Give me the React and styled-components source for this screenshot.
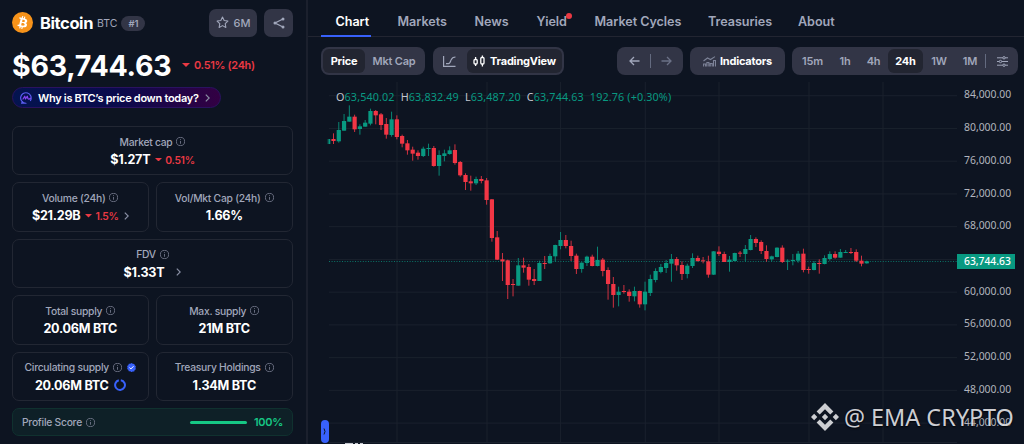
import React from 'react'
import styled, { createGlobalStyle } from 'styled-components'

const GlobalStyle = createGlobalStyle`
   * { box-sizing: border-box; }
   body {
      margin: 0;
      background: #0d1421;
      overflow: hidden;
      font-family: Inter, "Liberation Sans", sans-serif;
   }
`
const Page = styled.div`
   position: relative;
   display: flex;
   width: 1024px;
   height: 444px;
   overflow: hidden;
   color: #fff;
`
const Sidebar = styled.aside`
   width: 308px;
   height: 444px;
   padding: 8px 13px 0 12px;
   border-right: 2px solid #1b202d;
   display: flex;
   flex-direction: column;
`
const Header = styled.div`
   display: flex;
   align-items: center;
   height: 29px;
`
const CoinName = styled.h1`
   margin: 0 0 0 7px;
   font-size: 16.5px;
   font-weight: 700;
   letter-spacing: -0.4px;
`
const Ticker = styled.span`
   margin: 2px 0 0 4px;
   font-size: 10.5px;
   color: #a1a7bb;
`
const Rank = styled.span`
   margin: 1px auto 0 4px;
   width: 24px;
   height: 15px;
   line-height: 15px;
   border-radius: 8px;
   background: #323546;
   color: #a1a7bb;
   font-size: 9.5px;
   font-weight: 600;
   text-align: center;
`
const HeaderButton = styled.button`
   width: ${(p) => p.$width}px;
   height: 28px;
   margin-left: 7px;
   padding: 0;
   border: 0;
   border-radius: 7px;
   background: #323546;
   color: #a1a7bb;
   font: 500 11px Inter, sans-serif;
   display: flex;
   align-items: center;
   justify-content: center;
   gap: 5px;
`
const PriceRow = styled.div`
   display: flex;
   align-items: center;
   height: 34px;
   margin-top: 11px;
`
const Price = styled.span`
   width: 170px;
   font-size: 28.5px;
   font-weight: 700;
   letter-spacing: -0.25px;
   white-space: nowrap;
`
const Change = styled.span`
   display: inline-flex;
   align-items: center;
   gap: ${(p) => p.$gap || 3}px;
   color: #ea3943;
   font-size: ${(p) => p.$size || 10.3}px;
   font-weight: 600;
   letter-spacing: -0.3px;
   white-space: nowrap;
`
const WhyButton = styled.button`
   width: 209px;
   height: 21px;
   margin: 5px 0 18px;
   padding: 0 0 0 7px;
   border: 1px solid #2a1260;
   border-radius: 11px;
   background: linear-gradient(90deg, #04144f 0%, #0a0a4c 50%, #330043 100%);
   color: #fff;
   font: 600 11px Inter, sans-serif;
   letter-spacing: -0.3px;
   display: flex;
   align-items: center;
   gap: 6px;
   white-space: nowrap;
`
const Stats = styled.div`
   display: grid;
   grid-template-columns: 136.5px 137.5px;
   grid-auto-rows: 49.4px;
   gap: 7px;
`
const StatCard = styled.div`
   grid-column: ${(p) => (p.$wide ? '1 / 3' : 'auto')};
   border: 1px solid #222733;
   border-radius: 7px;
   display: flex;
   flex-direction: column;
   align-items: center;
   padding-top: 7px;
`
const Label = styled.div`
   display: flex;
   align-items: center;
   gap: 4px;
   height: 15px;
   color: #a1a7bb;
   font-size: 10.3px;
   font-weight: 500;
   letter-spacing: -0.25px;
   white-space: nowrap;
`
const Value = styled.div`
   display: flex;
   align-items: center;
   gap: ${(p) => p.$gap || 5}px;
   height: 21px;
   font-size: 12.6px;
   font-weight: 700;
   letter-spacing: -0.25px;
   white-space: nowrap;
`
const Score = styled.div`
   display: flex;
   align-items: center;
   height: 28px;
   margin-top: 7px;
   padding: 1px 9px 0;
   border: 1px solid #10312f;
   border-radius: 7px;
   background: #0e2027;
`
const ScoreBar = styled.div`
   width: 57px;
   height: 3px;
   margin: 0 7px 0 auto;
   border-radius: 2px;
   background: #16c784;
`
const ScoreValue = styled.span`
   color: #16c784;
   font-size: 11px;
   font-weight: 600;
   letter-spacing: -0.3px;
`
const Main = styled.main`
   width: 716px;
   display: flex;
   flex-direction: column;
`
const Tabs = styled.nav`
   display: flex;
   height: 37px;
   padding-left: 13px;
   border-bottom: 1px solid #222531;
`
const Tab = styled.a`
   position: relative;
   width: ${(p) => p.$width}px;
   height: ${(p) => (p.$active ? 37 : 36)}px;
   margin-right: ${(p) => p.$gap || 0}px;
   padding: 12px 0 0 14.5px;
   border-bottom: ${(p) => (p.$active ? '2px solid #3861fb' : '0')};
   color: ${(p) => (p.$active ? '#fff' : '#a1a7bb')};
   font-size: 12.6px;
   font-weight: 600;
   letter-spacing: -0.05px;
   line-height: 19px;
   white-space: nowrap;
`
const Dot = styled.i`
   position: absolute;
   left: 44px;
   top: 13px;
   width: 6px;
   height: 6px;
   border-radius: 50%;
   background: #ea3943;
`
const Toolbar = styled.div`
   display: flex;
   height: 28px;
   margin: 10px 6px 0 13px;
`
const Group = styled.div`
   display: flex;
   align-items: center;
   justify-content: ${(p) => p.$justify || 'flex-start'};
   gap: ${(p) => p.$gap || 0}px;
   width: ${(p) => p.$width}px;
   height: 28px;
   margin-left: ${(p) => p.$left || 0}px;
   padding: 0 2px;
   border-radius: 8px;
   background: #323546;
   color: #a1a7bb;
   font-size: 11px;
   font-weight: 600;
`
const Segment = styled.div`
   display: flex;
   flex-shrink: 0;
   align-items: center;
   justify-content: center;
   gap: ${(p) => p.$gap || 4}px;
   width: ${(p) => p.$width}px;
   height: 24px;
   border-radius: 6px;
   background: ${(p) => (p.$active ? '#222531' : 'transparent')};
   color: ${(p) => (p.$active || p.$bright ? '#fff' : '#a1a7bb')};
   font-weight: ${(p) => (p.$active || p.$bright ? 700 : 600)};
   letter-spacing: -0.2px;
   white-space: nowrap;
`
const Divider = styled.i`
   flex-shrink: 0;
   width: 1px;
   height: 14px;
   background: #646b80;
`
const ChartArea = styled.section`
   position: relative;
   display: flex;
   height: 369px;
   font-family: "Noto Sans", "Open Sans", sans-serif;
`
const Plot = styled.svg`
   display: block;
   width: 649px;
   height: 369px;
`
const Axis = styled.div`
   padding-top: 3.4px;
   width: 61px;
`
const Tick = styled.div`
   height: 32.72px;
   line-height: 33px;
   padding-left: 7px;
   color: #b2b5be;
   font-size: 10.4px;
`
const PriceTag = styled.div`
   position: absolute;
   left: 649px;
   top: 179px;
   width: 58px;
   height: 15px;
   padding-left: 7px;
   line-height: 15px;
   background: #089981;
   font-size: 10.3px;
   font-weight: 500;
`
const Legend = styled.div`
   position: absolute;
   left: 28px;
   top: 14px;
   display: flex;
   gap: 6px;
   font-size: 10.8px;
   letter-spacing: 0.12px;
   line-height: 16px;
   color: #c4c7cf;
   white-space: nowrap;

   b {
      font-weight: 400;
      color: #089981;
   }
`
const Handle = styled.div`
   position: absolute;
   left: 13px;
   top: 345px;
   width: 8px;
   height: 23px;
   border-radius: 4px;
   background: #3861fb;
   display: flex;
   align-items: center;
   justify-content: center;
`
const Watermark = styled.div`
   position: absolute;
   left: 811px;
   top: 402px;
   height: 30px;
   display: flex;
   align-items: center;
   gap: 5px;
   color: #dcdde0;
   opacity: 0.93;
   font-family: "Noto Sans", "Open Sans", sans-serif;
   font-size: 23.4px;
   white-space: nowrap;
   text-shadow: 0 1px 2px #000;
`

// direction, body top, body bottom, wick top, wick bottom (1/3 px from y = 90)
const candles = [
   ['g', 147, 162, 147, 162], ['r', 147, 153, 130, 162], ['g', 120, 154, 96, 158],
   ['g', 93, 122, 72, 122], ['g', 80, 95, 46, 95], ['r', 80, 118, 74, 126],
   ['g', 109, 117, 103, 134], ['g', 98, 110, 90, 110], ['g', 63, 101, 56, 106],
   ['r', 63, 76, 60, 103], ['r', 73, 105, 69, 120], ['r', 102, 134, 84, 146],
   ['g', 88, 135, 65, 140], ['r', 88, 141, 76, 148], ['r', 138, 161, 134, 172],
   ['r', 160, 181, 150, 194], ['r', 179, 191, 170, 212], ['r', 188, 198, 181, 209],
   ['g', 176, 198, 170, 201], ['g', 174, 177, 161, 198], ['r', 174, 228, 168, 230],
   ['g', 195, 228, 181, 257], ['g', 190, 198, 179, 214], ['g', 181, 192, 169, 194],
   ['r', 180, 219, 163, 224], ['r', 216, 256, 213, 260], ['r', 255, 276, 250, 300],
   ['r', 274, 280, 257, 302], ['g', 267, 280, 260, 285], ['r', 267, 273, 258, 280],
   ['r', 271, 330, 264, 344], ['r', 328, 444, 327, 455], ['r', 442, 509, 423, 510],
   ['r', 508, 514, 489, 573], ['r', 511, 585, 509, 627], ['r', 582, 585, 567, 619],
   ['g', 526, 587, 504, 587], ['r', 526, 533, 503, 548], ['r', 531, 569, 522, 587],
   ['r', 567, 573, 537, 585], ['g', 519, 573, 512, 573], ['r', 519, 522, 498, 537],
   ['g', 498, 520, 491, 521], ['g', 465, 499, 464, 515], ['g', 450, 468, 426, 478],
   ['r', 450, 468, 435, 475], ['r', 468, 498, 452, 513], ['r', 497, 537, 491, 552],
   ['g', 518, 537, 517, 548], ['g', 500, 519, 497, 528], ['r', 500, 528, 494, 529],
   ['g', 510, 528, 470, 529], ['r', 509, 543, 504, 559], ['r', 540, 582, 532, 629],
   ['r', 582, 615, 561, 653], ['g', 605, 615, 590, 649], ['r', 603, 606, 585, 611],
   ['r', 605, 618, 598, 635], ['g', 603, 619, 590, 634], ['r', 603, 643, 602, 653],
   ['g', 605, 643, 575, 661], ['g', 567, 609, 554, 618], ['g', 543, 570, 535, 577],
   ['g', 531, 546, 522, 550], ['g', 519, 534, 510, 549], ['g', 507, 521, 492, 575],
   ['r', 507, 526, 501, 542], ['r', 525, 552, 514, 570], ['g', 527, 552, 521, 565],
   ['g', 504, 528, 490, 534], ['r', 504, 513, 497, 515], ['r', 511, 514, 501, 520],
   ['r', 514, 554, 497, 563], ['g', 484, 554, 483, 555], ['r', 485, 492, 469, 498],
   ['r', 492, 516, 485, 516], ['g', 509, 516, 498, 545], ['g', 489, 513, 488, 514],
   ['r', 488, 491, 483, 501], ['g', 477, 492, 465, 514], ['g', 447, 480, 435, 481],
   ['r', 447, 459, 442, 471], ['r', 456, 483, 451, 492], ['r', 483, 507, 466, 515],
   ['g', 499, 508, 497, 514], ['g', 473, 501, 472, 502], ['r', 473, 516, 466, 519],
   ['g', 512, 515, 508, 540], ['g', 510, 513, 492, 526], ['g', 491, 512, 483, 518],
   ['r', 491, 540, 476, 547], ['r', 537, 540, 530, 551], ['g', 519, 540, 513, 541],
   ['r', 519, 522, 508, 551], ['g', 504, 522, 496, 523], ['g', 492, 507, 484, 512],
   ['r', 492, 503, 484, 506], ['g', 486, 503, 477, 503], ['g', 486, 489, 480, 489],
   ['r', 486, 489, 474, 492], ['r', 486, 512, 478, 516], ['r', 512, 521, 497, 529],
   ['g', 514, 520, 512, 521],
]
const ticks = ['84,000.00', '80,000.00', '76,000.00', '72,000.00', '68,000.00', '', '60,000.00', '56,000.00', '52,000.00', '48,000.00', '44,000.00']
const months = [397, 487, 560.6, 645.3, 719, 809, 883]

const Info = () => (
   <svg width="9" height="9" viewBox="0 0 18 18" fill="none" stroke="#7c8296" strokeWidth="1.6">
      <circle cx="9" cy="9" r="8.2" />
      <path d="M9 8v5.5M9 4.4v1.8" />
   </svg>
)
const Down = ({ size = 8 }) => (
   <svg width={size} height={size / 2} viewBox="0 0 8 4"><path d="M0 0h8L4 4z" fill="#ea3943" /></svg>
)
const Chevron = () => (
   <svg width="5" height="8" viewBox="0 0 5 8" fill="none" stroke="#8a90a5" strokeWidth="1.2"><path d="M0.8 0.6L4.2 4L0.8 7.4" /></svg>
)
const BitcoinLogo = () => (
   <svg width="21" height="21" viewBox="0 0 32 32">
      <circle cx="16" cy="16" r="16" fill="#f7931a" />
      <path fill="#fff" d="M23.19 14.02c.31-2.1-1.29-3.23-3.47-3.98l.7-2.84-1.72-.43-.69 2.77-1.38-.33.7-2.78-1.73-.43-.7 2.84-3.48-.86-.46 1.84s1.28.3 1.25.32c.7.17.83.63.8 1l-1.96 7.87c-.09.21-.31.54-.8.41.02.03-1.25-.31-1.25-.31l-.86 1.98 3.46.87-.72 2.88 1.73.43.71-2.85 1.38.35-.71 2.83 1.73.43.71-2.87c2.95.56 5.17.33 6.1-2.34.76-2.14-.04-3.38-1.58-4.18 1.13-.26 1.97-1 2.2-2.53zm-3.95 5.54c-.54 2.15-4.15.99-5.32.7l.95-3.81c1.17.29 4.92.87 4.37 3.11zm.53-5.57c-.49 1.96-3.49.97-4.47.72l.86-3.45c.98.24 4.12.7 3.61 2.73z" />
   </svg>
)

const Stat = ({ label, value, wide, verified, gap, children }) => (
   <StatCard $wide={wide}>
      <Label>
         {label} <Info />
         {verified && (
            <svg width="10" height="9" viewBox="-2 0 20 18">
               <path d="M9 0l2.5 1.7 3 .1 1 2.9 2.3 1.9-.9 2.9.9 2.9-2.4 1.8-1 2.9h-3L9 18.3l-2.5-1.7-3-.1-1-2.9L.2 11.8l.9-2.8-.9-2.9L2.6 4.3l1-2.9 3 .1z" fill="#3861fb" />
               <path d="M5 9.2l2.8 2.7L13 6.5" fill="none" stroke="#fff" strokeWidth="2" />
            </svg>
         )}
      </Label>
      <Value $gap={gap}>{value}{children}</Value>
   </StatCard>
)

const Chart = () => (
   <Plot viewBox="308 75 649 369">
      <g fill="#1a212d">
         {ticks.map((t, i) => <rect key={i} x="329" y={95.2 + i * 32.74} width="628" height="1" />)}
         {months.map((x) => <rect key={x} x={x - 0.5} y="82" width="1" height="360" />)}
         <rect x="329" y="442" width="628" height="1" />
      </g>
      {/* top edge of the next panel's logo, cut by the window */}
      <path d="M345 443.5h8M355 443.5h3M360 443.5h3" stroke="#c4c7cf" />
      <path d="M329 261.5H957" stroke="#0b7468" strokeWidth="1" strokeDasharray="1 1.6" />
      {candles.map(([dir, top, bottom, high, low], i) => {
         const x = 328.22 + i * 5.28
         const left = Math.max(x - 2.1, 329)
         return (
            <g key={i} fill={dir === 'g' ? '#089981' : '#f23645'}>
               <rect x={x - 0.5} y={90 + high / 3} width="1" height={(low - high) / 3} opacity="0.85" />
               <rect x={left} y={90 + top / 3} width={x + 2.1 - left} height={(bottom - top) / 3} />
            </g>
         )
      })}
   </Plot>
)

const App = () => {
   return (
      <Page>
         <GlobalStyle />
         <Sidebar>
            <Header>
               <BitcoinLogo />
               <CoinName>Bitcoin</CoinName>
               <Ticker>BTC</Ticker>
               <Rank>#1</Rank>
               <HeaderButton $width={48}>
                  <svg width="13" height="13" viewBox="0 0 24 24" fill="none" stroke="currentColor" strokeWidth="2" strokeLinejoin="round">
                     <path d="M12 2l3.1 6.3 6.9 1-5 4.9 1.2 6.9L12 17.8l-6.2 3.3L7 14.2 2 9.3l6.9-1z" />
                  </svg>
                  6M
               </HeaderButton>
               <HeaderButton $width={29}>
                  <svg width="12" height="12" viewBox="0 0 12 12" fill="none" stroke="currentColor" strokeWidth="1.3">
                     <path d="M10 2L2 6l8 4" />
                     <g fill="currentColor" stroke="none">
                        <circle cx="10" cy="2" r="1.5" /><circle cx="2" cy="6" r="1.5" /><circle cx="10" cy="10" r="1.5" />
                     </g>
                  </svg>
               </HeaderButton>
            </Header>
            <PriceRow>
               <Price>$63,744.63</Price>
               <Change $gap={4} $size={10.9}><Down /> 0.51% (24h)</Change>
            </PriceRow>
            <WhyButton>
               <svg width="12" height="12" viewBox="0 0 24 24" fill="none" strokeWidth="2.4" strokeLinecap="round" strokeLinejoin="round">
                  <path d="M21 17a10.5 10.5 0 1 0-9 5.5H3l2-3" stroke="#5a5cf0" />
                  <path d="M6 14l3.5-5.5 1.5 5.5 3.5-5.5 1.5 5q1.5 2 5-1" stroke="#8a46f5" />
               </svg>
               Why is BTC’s price down today?
               <Chevron />
            </WhyButton>
            <Stats>
               <Stat wide label="Market cap" value="$1.27T"><Change><Down size={7} />0.51%</Change></Stat>
               <Stat label="Volume (24h)" value="$21.29B">
                  <Change><Down size={7} />1.5%</Change>
                  <Chevron />
               </Stat>
               <Stat label="Vol/Mkt Cap (24h)" value="1.66%" />
               <Stat wide label="FDV" value="$1.33T" gap={12}><Chevron /></Stat>
               <Stat label="Total supply" value="20.06M BTC" />
               <Stat label="Max. supply" value="21M BTC" />
               <Stat label="Circulating supply" value="20.06M BTC" verified>
                  <svg width="12" height="12" viewBox="0 0 12 12" fill="none" stroke="#3861fb" strokeWidth="2">
                     <path d="M6.8 1.2A4.9 4.9 0 1 1 4.8 1.3" />
                  </svg>
               </Stat>
               <Stat label="Treasury Holdings" value="1.34M BTC" />
            </Stats>
            <Score>
               <Label>Profile Score <Info /></Label>
               <ScoreBar />
               <ScoreValue>100%</ScoreValue>
            </Score>
         </Sidebar>
         <Main>
            <Tabs>
               <Tab $width={50} $gap={12} $active>Chart</Tab>
               <Tab $width={77}>Markets</Tab>
               <Tab $width={62}>News</Tab>
               <Tab $width={58}>Yield<Dot /></Tab>
               <Tab $width={113.5}>Market Cycles</Tab>
               <Tab $width={90}>Treasuries</Tab>
               <Tab $width={60}>About</Tab>
            </Tabs>
            <Toolbar>
               <Group $width={104}>
                  <Segment $width={42} $active>Price</Segment>
                  <Segment $width={58}>Mkt Cap</Segment>
               </Group>
               <Group $width={131} $left={8}>
                  <Segment $width={32}>
                     <svg width="13" height="11" viewBox="0 0 13 11" fill="none" stroke="currentColor" strokeWidth="1.2" transform="translate(-2 0)">
                        <path d="M0.6 0V10.4H12.5M3 7.6c4 .5 4-1 5-3.5S10 1 12.5 1" />
                     </svg>
                  </Segment>
                  <Segment $width={95} $gap={5} $active>
                     <svg width="12" height="12" viewBox="0 0 12 12" fill="none" stroke="#fff" strokeWidth="1.3">
                        <rect x="1" y="4.5" width="3.2" height="4.5" rx="1" />
                        <rect x="7.8" y="2.5" width="3.2" height="6.5" rx="1" />
                        <path d="M2.6 2v2.5M2.6 9v2M9.4 0.5v2M9.4 9v2.5" />
                     </svg>
                     TradingView
                  </Segment>
               </Group>
               <Group $width={66} $left={53} $justify="center" $gap={10}>
                  <svg width="11" height="10" viewBox="0 0 11 10" fill="none" stroke="currentColor" strokeWidth="1.3"><path d="M10.5 5H1M5 1L1 5l4 4" /></svg>
                  <Divider />
                  <svg width="11" height="10" viewBox="0 0 11 10" fill="none" stroke="#6b7186" strokeWidth="1.3"><path d="M0.5 5H10M6 1l4 4-4 4" /></svg>
               </Group>
               <Group $width={95} $left={7}>
                  <Segment $width={91} $bright>
                     <svg width="13" height="11" viewBox="0 0 13 11" fill="none" stroke="#7d8398" strokeWidth="1.1">
                        <path d="M0.6 10.5V8h2v2.5M3.9 10.5V6.5h2v4M7.2 10.5V7.5h2v3M10.5 10.5V4.5h2v6M0.5 5L4.5 2l3 1.5L12 0.6" />
                     </svg>
                     Indicators
                  </Segment>
               </Group>
               <Group $width={226} $left={7}>
                  <Segment $width={37}>15m</Segment>
                  <Segment $width={28}>1h</Segment>
                  <Segment $width={29}>4h</Segment>
                  <Segment $width={35} $active>24h</Segment>
                  <Segment $width={32}>1W</Segment>
                  <Segment $width={30}>1M</Segment>
                  <Divider />
                  <Segment $width={32}>
                     <svg width="11" height="11" viewBox="0 0 11 11" fill="#323546" stroke="#a1a7bb" strokeWidth="1">
                        <path d="M0 1.8h11M0 5.5h11M0 9.2h11" />
                        <circle cx="7" cy="1.8" r="1.2" /><circle cx="3.5" cy="5.5" r="1.2" /><circle cx="7" cy="9.2" r="1.2" />
                     </svg>
                  </Segment>
               </Group>
            </Toolbar>
            <ChartArea>
               <Chart />
               <Axis>
                  {ticks.map((t, i) => <Tick key={i}>{t}</Tick>)}
               </Axis>
               <PriceTag>63,744.63</PriceTag>
               <Legend>
                  <span>O<b>63,540.02</b></span>
                  <span>H<b>63,832.49</b></span>
                  <span>L<b>63,487.20</b></span>
                  <span>C<b>63,744.63</b></span>
                  <b>192.76 (+0.30%)</b>
               </Legend>
               <Handle>
                  <svg width="4" height="7" viewBox="0 0 4 7" fill="none" stroke="#0d1421"><path d="M1 0.5q2 3 0 6" /></svg>
               </Handle>
            </ChartArea>
         </Main>
         <Watermark>
            <svg width="28" height="28" viewBox="0 0 24 24" fill="currentColor">
               <path d="M12 0L4.8 7.2l2.7 2.7L12 5.4l4.5 4.5 2.7-2.7zM0 12l2.7-2.7L5.4 12l-2.7 2.7zM12 9.3l2.7 2.7-2.7 2.7L9.3 12zM18.6 12l2.7-2.7L24 12l-2.7 2.7zM4.8 16.8L12 24l7.2-7.2-2.7-2.7-4.5 4.5-4.5-4.5z" />
            </svg>
            @ EMA CRYPTO
         </Watermark>
      </Page>
   )
}

export default App
